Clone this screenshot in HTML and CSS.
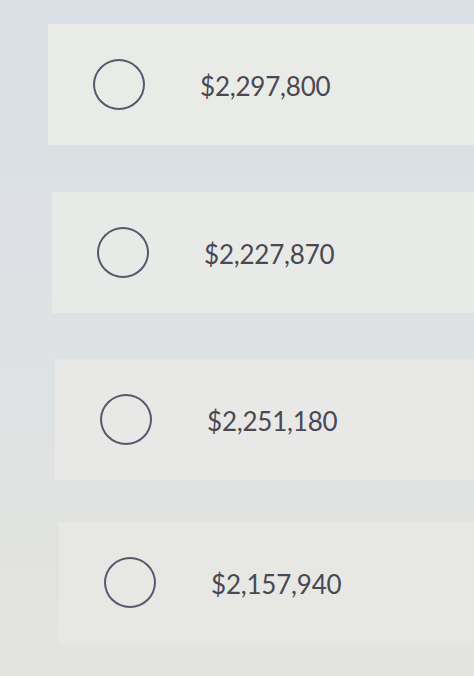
FILE: index.html
```html
<!DOCTYPE html>
<html>
<head>
<meta charset="utf-8">
<link rel="stylesheet" href="styles.css">
</head>
<body>
<div class="list">
  <div class="opt o1"><span class="radio"></span><span class="val">$2,297,800</span></div>
  <div class="opt o2"><span class="radio"></span><span class="val">$2,227,870</span></div>
  <div class="opt o3"><span class="radio"></span><span class="val">$2,251,180</span></div>
  <div class="opt o4"><span class="radio"></span><span class="val">$2,157,940</span></div>
</div>
</body>
</html>
```
FILE: styles.css
```css
html, body {
  margin: 0;
  padding: 0;
  width: 474px;
  height: 676px;
  overflow: hidden;
}
body {
  background: linear-gradient(180deg, #d9dfe5 0%, #dde1e5 40%, #e1e3e1 75%, #e4e4df 100%);
  font-family: Lato, "Open Sans", sans-serif;
}
.list {
  display: flex;
  flex-direction: column;
  padding: 24px 0 0 48px;
}
.opt {
  height: 121px;
  display: flex;
  align-items: center;
  background: #e9ebe8;
  box-sizing: border-box;
  padding-left: 45px;
}
.o1 { background: #e9ebe7; }
.o2 { margin-top: 47px; margin-left: 4px; background: #e8eae7; }
.o3 { margin-top: 46px; margin-left: 7px; background: #e8e9e6; }
.o4 { margin-top: 42px; margin-left: 11px; background: #e7e8e3; }
.radio {
  width: 52px;
  height: 51px;
  border: 2.5px solid #59576f;
  border-radius: 50%;
  box-sizing: border-box;
  flex: none;
}
.val {
  margin-left: 55px;
  font-size: 26px;
  color: #4a4854;
  letter-spacing: -0.2px;
  padding-top: 2px;
}
```
